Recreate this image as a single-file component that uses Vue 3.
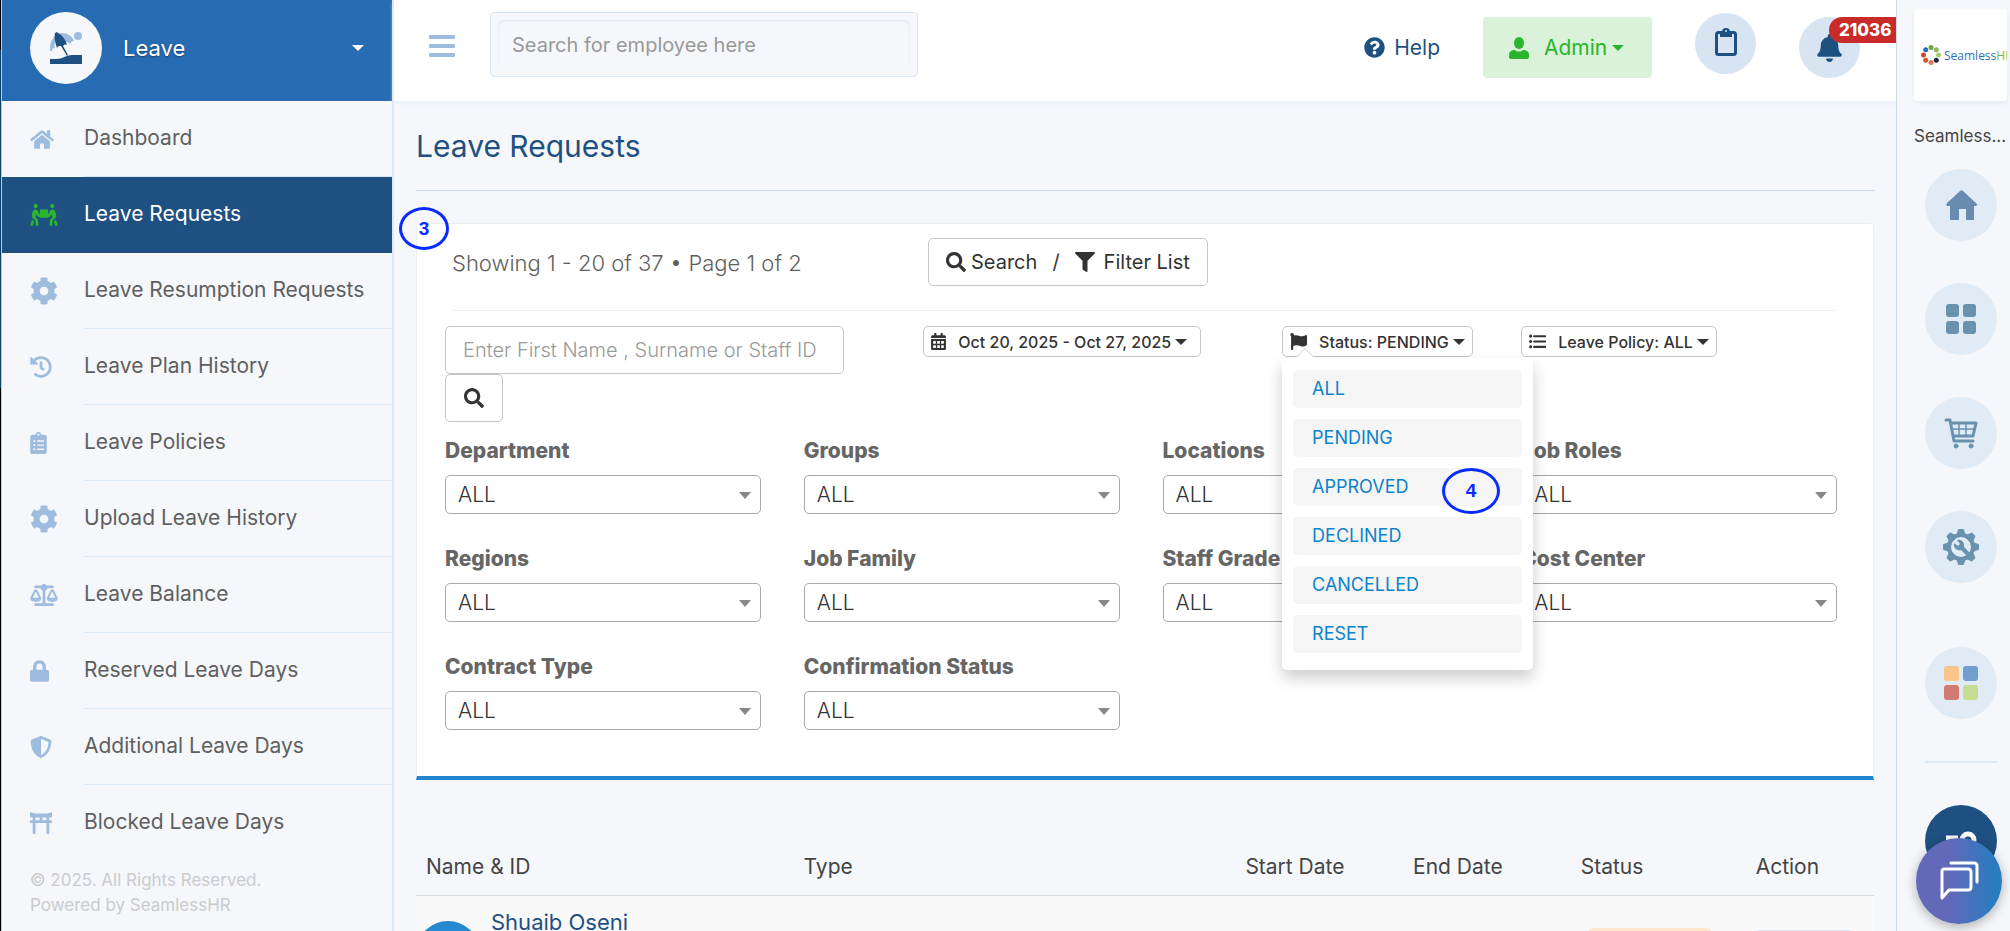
<template>
  <div class="app">
    <div class="edge"></div>

    <!-- left navigation -->
    <aside class="sidebar">
      <button class="module" type="button">
        <span class="module__logo">
          <svg viewBox="0 0 32 32" width="32" height="32">
            <path fill="#9dbcde" d="M0 19C-1 9 5 1 12 1c6 0 10 3 12 8-2 0-3 1-4 3-1-1-2-2-4-2L7 7C5 9 4 13 5 16c-2 0-3 1-3 3z" />
            <circle fill="#9dbcde" cx="28" cy="4" r="4" />
            <path fill="#1f5082" d="M5 1l2-1 1 1c4 2 8 7 9 12-2-1-3 0-4 1l5 9-1 1-6-10c-2 0-3 0-4 2C5 11 4 5 5 1z" />
            <path fill="#1f5082" d="M0 27h6c7 0 10-4 16-4h10v9H0z" />
          </svg>
        </span>
        <span class="module__name">Leave</span>
        <span class="caret"></span>
      </button>
      <nav class="menu">
        <a
          v-for="item in menu"
          :key="item.label"
          href="#"
          :class="['menu__item', { 'menu__item--active': item.label === current }]"
          @click.prevent="current = item.label"
        >
          <span class="menu__icon"><Icon :name="item.icon" :size="item.size" /></span>
          <span class="menu__label">{{ item.label }}</span>
        </a>
      </nav>
      <p class="copyright">© 2025. All Rights Reserved.<br />Powered by SeamlessHR</p>
    </aside>

    <div class="page">
      <header class="topbar">
        <button class="burger" type="button" aria-label="Toggle menu"><i></i><i></i><i></i></button>
        <div class="finder">
          <input type="text" placeholder="Search for employee here" aria-label="Search for employee" />
        </div>
        <a class="help" href="#"><Icon name="question" :size="21" /><span>Help</span></a>
        <button class="admin" type="button">
          <svg viewBox="0 0 20 22" width="20" height="22" fill="currentColor">
            <ellipse cx="10" cy="6" rx="5" ry="6" />
            <path d="M6 13c2 2 6 2 8 0 4 0 6 2 6 5v2c0 1-1 2-2 2H2c-1 0-2-1-2-2v-2c0-3 2-5 6-5z" />
          </svg>
          <span>Admin</span>
          <span class="caret"></span>
        </button>
        <button class="round round--clip" type="button" aria-label="Tasks">
          <svg viewBox="0 0 22 29" width="22" height="29">
            <rect x="1.5" y="5.5" width="19" height="22" rx="2" fill="none" stroke="currentColor" stroke-width="3" />
            <path fill="currentColor" d="M5 5h2a4 4 0 0 1 8 0h2v5H5z" />
            <circle cx="11" cy="4" r="1" fill="#d8e4f2" />
          </svg>
        </button>
        <button class="round round--bell" type="button" aria-label="Notifications">
          <Icon name="bell" :size="28" />
          <span class="count">21036</span>
        </button>
      </header>

      <main class="content">
        <h1>Leave Requests</h1>

        <section class="card">
          <span class="marker marker--card">3</span>
          <div class="card__top">
            <p class="showing">Showing 1 - 20 of 37 • Page 1 of 2</p>
            <div>
              <button class="btn btn--lg" type="button">
                <Icon name="search" :size="20" /><span>Search</span>
                <span class="slash">/</span>
                <Icon name="filter" :size="20" /><span class="filter-text">Filter List</span>
              </button>
            </div>
          </div>

          <div class="toolbar">
            <div class="lookup">
              <input v-model="staff" type="text" placeholder="Enter First Name , Surname or Staff ID" aria-label="Staff" />
              <button class="btn btn--icon" type="button" aria-label="Search staff"><Icon name="search" :size="20" /></button>
            </div>
            <div>
              <button class="btn btn--sm" type="button">
                <Icon name="calendar" :size="17" /><span>Oct 20, 2025 - Oct 27, 2025</span><span class="caret"></span>
              </button>
            </div>
            <div class="dropdown">
              <button class="btn btn--sm" type="button" @click="open = !open">
                <Icon name="flag" :size="17" /><span>Status: PENDING</span><span class="caret"></span>
              </button>
              <ul v-if="open" class="dropdown__menu">
                <li v-for="s in statuses" :key="s">
                  <a href="#" @click.prevent>{{ s }}</a>
                  <span v-if="s === 'APPROVED'" class="marker marker--status">4</span>
                </li>
              </ul>
            </div>
            <div>
              <button class="btn btn--sm" type="button">
                <Icon name="list" :size="17" /><span>Leave Policy: ALL</span><span class="caret"></span>
              </button>
            </div>
          </div>

          <div class="filters">
            <div v-for="(f, i) in filters" :key="f" class="field">
              <label :for="'filter-' + i">{{ f }}</label>
              <div class="select">
                <select :id="'filter-' + i"><option>ALL</option></select>
              </div>
            </div>
          </div>
        </section>

        <table class="requests">
          <thead>
            <tr>
              <th class="c-name">Name &amp; ID</th>
              <th class="c-type">Type</th>
              <th class="c-start">Start Date</th>
              <th class="c-end">End Date</th>
              <th class="c-status">Status</th>
              <th class="c-action">Action</th>
            </tr>
          </thead>
          <tbody>
            <tr>
              <td class="person-cell">
                <div class="person"><span class="avatar"></span><a href="#">Shuaib Oseni</a></div>
              </td>
              <td></td>
              <td></td>
              <td></td>
              <td><span class="state"></span></td>
              <td><button class="view" type="button" aria-label="View request"></button></td>
            </tr>
          </tbody>
        </table>
      </main>
    </div>

    <!-- company rail -->
    <aside class="rail">
      <div class="company">
        <svg viewBox="0 0 20 20" width="20" height="20">
          <circle v-for="(d, i) in logoDots" :key="i" :cx="d.x" :cy="d.y" r="2.5" :fill="d.color" />
        </svg>
        <span>Seamless<b>HR</b></span>
      </div>
      <p class="company-name">Seamless...</p>
      <a class="rail__link" href="#" aria-label="Home">
        <svg viewBox="0 0 31 31" width="31" height="31" fill="#698bb0">
          <path d="M14 1c1-1 2-1 3 0l13 12c2 2 1 3-1 3h-1v13c0 1 0 1-1 1h-6c-1 0-1 0-1-1V19h-7v10c0 1 0 1-1 1H5c-1 0-1 0-1-1V16H2c-2 0-2-1-1-3z" />
        </svg>
      </a>
      <a class="rail__link" href="#" aria-label="Apps">
        <svg viewBox="0 0 30 30" width="30" height="30" fill="#6992ae">
          <rect width="13" height="13" rx="3" /><rect x="17" width="13" height="13" rx="3" />
          <rect y="17" width="13" height="13" rx="3" /><rect x="17" y="17" width="13" height="13" rx="3" />
        </svg>
      </a>
      <a class="rail__link" href="#" aria-label="Store">
        <svg viewBox="0 0 34 32" width="34" height="32" fill="none" stroke="#6992ae" stroke-width="3" stroke-linecap="round" stroke-linejoin="round">
          <path d="M2 3h4l4 21h19M7 6h25l-3 13H10" />
          <path stroke-width="1.5" d="M8 12h22M15 6v13M22 6v13" />
          <circle cx="12" cy="29" r="2" fill="#6992ae" stroke-width="1" /><circle cx="27" cy="29" r="2" fill="#6992ae" stroke-width="1" />
        </svg>
      </a>
      <a class="rail__link" href="#" aria-label="Settings">
        <svg viewBox="0 0 36 36" width="36" height="36" fill="#6992ae">
          <g v-for="a in 8" :key="a" :transform="`rotate(${a * 45} 18 18)`"><path d="M14 7l2-6h4l2 6z" stroke="#6992ae" stroke-width="2" stroke-linejoin="round" /></g>
          <circle cx="18" cy="18" r="12" fill="none" stroke="#6992ae" stroke-width="4" />
          <path d="M14 11l3 4-2 2-4-3c-1 5 3 8 7 7l8 8 3-3-8-8c1-4-2-8-7-7z" />
        </svg>
      </a>
      <a class="rail__link rail__link--suite" href="#" aria-label="Suite">
        <svg viewBox="0 0 34 34" width="34" height="34">
          <rect width="15" height="15" rx="3" fill="#f7c48b" /><rect x="19" width="15" height="15" rx="3" fill="#749dcf" />
          <rect y="19" width="15" height="15" rx="3" fill="#d17a72" /><rect x="19" y="19" width="15" height="15" rx="3" fill="#c5dc93" />
        </svg>
      </a>
      <hr />
      <a class="rail__link rail__link--dark" href="#" aria-label="Switch">
        <svg viewBox="0 0 32 20" width="32" height="20" fill="none" stroke="#fff" stroke-width="5">
          <path d="M1 7h12" /><circle cx="23" cy="9" r="6" />
        </svg>
      </a>
    </aside>

    <button class="chat" type="button" aria-label="Chat">
      <svg viewBox="0 0 40 40" width="40" height="40" fill="none" stroke="#fff" stroke-width="3" stroke-linecap="round" stroke-linejoin="round">
        <path d="M12 2h23c2 0 3 1 3 3v16" />
        <path d="M5 8h24c2 0 3 1 3 3v15c0 2-1 3-3 3H10l-7 8V10c0-1 1-2 2-2z" />
      </svg>
    </button>
  </div>
</template>

<script setup>
import { ref, h } from 'vue'

// [width, height, path]
const paths = {
  home: [576, 512, 'M280.37 148.26L96 300.11V464a16 16 0 0 0 16 16l112.06-.29a16 16 0 0 0 15.92-16V368a16 16 0 0 1 16-16h64a16 16 0 0 1 16 16v95.64a16 16 0 0 0 16 16.05L464 480a16 16 0 0 0 16-16V300L295.67 148.26a12.19 12.19 0 0 0-15.3 0zM571.6 251.47L488 182.56V44.05a12 12 0 0 0-12-12h-56a12 12 0 0 0-12 12v72.61L318.47 43a48 48 0 0 0-61 0L4.34 251.47a12 12 0 0 0-1.6 16.9l25.5 31A12 12 0 0 0 45.15 301l235.22-193.74a12.19 12.19 0 0 1 15.3 0L530.9 301a12 12 0 0 0 16.9-1.6l25.5-31a12 12 0 0 0-1.7-16.93z'],
  carry: [640, 512, 'M128 96c26.5 0 48-21.5 48-48S154.5 0 128 0 80 21.5 80 48s21.5 48 48 48zm384 0c26.5 0 48-21.5 48-48S538.5 0 512 0s-48 21.5-48 48 21.5 48 48 48zm125.7 372.1l-44-110-41.1 46.4-2 18.2 27.7 69.2c5 12.5 17 20.1 29.7 20.1 4 0 8-.7 11.9-2.3 16.4-6.6 24.4-25.2 17.8-41.6zm-34.2-209.8L585 178.1c-4.6-20-18.6-36.8-37.5-44.9-18.5-8-39-6.7-56.1 3.3-22.7 13.4-39.6 34.5-48.1 59.4L432 229.8 416 240v-96c0-8.8-7.2-16-16-16H240c-8.8 0-16 7.2-16 16v96l-16.1-10.2-11.3-33.9c-8.3-25-25.4-46-48.1-59.4-17.2-10-37.6-11.3-56.1-3.3-18.9 8.1-32.9 24.9-37.5 44.9l-18.4 80.2c-4.6 20 .7 41.2 14.4 56.7l67.2 75.9 10.1 92.6C130 499.8 143.8 512 160 512c1.2 0 2.3-.1 3.5-.2 17.6-1.9 30.2-17.7 28.3-35.3l-10.1-92.8c-1.5-13-6.9-25.1-15.6-35l-43.3-49 17.6-70.3 6.8 20.4c4.1 12.5 11.9 23.4 24.5 32.6l51.1 32.5c4.6 2.9 12.1 4.6 17.2 5h160c5.1-.4 12.6-2.1 17.2-5l51.1-32.5c12.6-9.2 20.4-20 24.5-32.6l6.8-20.4 17.6 70.3-43.3 49c-8.7 9.9-14.1 22-15.6 35l-10.1 92.8c-1.9 17.6 10.8 33.4 28.3 35.3 1.2.1 2.3.2 3.5.2 16.1 0 30-12.1 31.8-28.5l10.1-92.6 67.2-75.9c13.6-15.5 19-36.7 14.4-56.7zM46.3 358.1l-44 110c-6.6 16.4 1.4 35 17.8 41.6 16.8 6.6 35.1-1.7 41.6-17.8l27.7-69.2-2-18.2-41.1-46.4z'],
  cog: [512, 512, 'M487.4 315.7l-42.6-24.6c4.3-23.2 4.3-47 0-70.2l42.6-24.6c4.9-2.8 7.1-8.6 5.5-14-11.1-35.6-30-67.8-54.7-94.6-3.8-4.1-10-5.1-14.8-2.3L380.8 110c-17.9-15.4-38.5-27.3-60.8-35.1V25.8c0-5.6-3.9-10.5-9.4-11.7-36.7-8.2-74.3-7.8-109.2 0-5.5 1.2-9.4 6.1-9.4 11.7V75c-22.2 7.9-42.8 19.8-60.8 35.1L88.7 85.5c-4.9-2.8-11-1.9-14.8 2.3-24.7 26.7-43.6 58.9-54.7 94.6-1.7 5.4.6 11.2 5.5 14L67.3 221c-4.3 23.2-4.3 47 0 70.2l-42.6 24.6c-4.9 2.8-7.1 8.6-5.5 14 11.1 35.6 30 67.8 54.7 94.6 3.8 4.1 10 5.1 14.8 2.3l42.6-24.6c17.9 15.4 38.5 27.3 60.8 35.1v49.2c0 5.6 3.9 10.5 9.4 11.7 36.7 8.2 74.3 7.8 109.2 0 5.5-1.2 9.4-6.1 9.4-11.7v-49.2c22.2-7.9 42.8-19.8 60.8-35.1l42.6 24.6c4.9 2.8 11 1.9 14.8-2.3 24.7-26.7 43.6-58.9 54.7-94.6 1.5-5.5-.7-11.3-5.6-14.1zM256 336c-44.1 0-80-35.9-80-80s35.9-80 80-80 80 35.9 80 80-35.9 80-80 80z'],
  history: [512, 512, 'M504 255.531c.253 136.64-111.18 248.372-247.82 248.468-59.015.042-113.223-20.53-155.822-54.911-11.077-8.94-11.905-25.541-1.839-35.607l11.267-11.267c8.609-8.609 22.353-9.551 31.891-1.984C173.062 425.135 212.781 440 256 440c101.705 0 184-82.311 184-184 0-101.705-82.311-184-184-184-48.814 0-93.149 18.969-126.068 49.932l50.754 50.754c10.08 10.08 2.941 27.314-11.313 27.314H24c-8.837 0-16-7.163-16-16V38.627c0-14.254 17.234-21.393 27.314-11.314l49.372 49.372C129.209 34.136 189.552 8 256 8c136.81 0 247.747 110.78 248 247.531zm-180.912 78.784l9.823-12.63c8.138-10.463 6.253-25.542-4.21-33.679L288 256.349V152c0-13.255-10.745-24-24-24h-16c-13.255 0-24 10.745-24 24v135.651l65.409 50.874c10.463 8.137 25.541 6.253 33.679-4.21z'],
  clipboard: [384, 512, 'M336 64h-80c0-35.3-28.7-64-64-64s-64 28.7-64 64H48C21.5 64 0 85.5 0 112v352c0 26.5 21.5 48 48 48h288c26.5 0 48-21.5 48-48V112c0-26.5-21.5-48-48-48zM96 424c-13.3 0-24-10.7-24-24s10.7-24 24-24 24 10.7 24 24-10.7 24-24 24zm0-96c-13.3 0-24-10.7-24-24s10.7-24 24-24 24 10.7 24 24-10.7 24-24 24zm0-96c-13.3 0-24-10.7-24-24s10.7-24 24-24 24 10.7 24 24-10.7 24-24 24zm96-192c13.3 0 24 10.7 24 24s-10.7 24-24 24-24-10.7-24-24 10.7-24 24-24zm128 368c0 4.4-3.6 8-8 8H168c-4.4 0-8-3.6-8-8v-16c0-4.4 3.6-8 8-8h144c4.4 0 8 3.6 8 8v16zm0-96c0 4.4-3.6 8-8 8H168c-4.4 0-8-3.6-8-8v-16c0-4.4 3.6-8 8-8h144c4.4 0 8 3.6 8 8v16zm0-96c0 4.4-3.6 8-8 8H168c-4.4 0-8-3.6-8-8v-16c0-4.4 3.6-8 8-8h144c4.4 0 8 3.6 8 8v16z'],
  scale: [640, 512, 'M256 336h-.02c0-16.18 1.34-8.73-85.05-181.51-17.65-35.29-68.19-35.36-85.87 0C-2.06 328.75.02 320.33.02 336H0c0 44.18 57.31 80 128 80s128-35.82 128-80zM128 176l72 144H56l72-144zm511.98 160c0-16.18 1.34-8.73-85.05-181.51-17.65-35.29-68.19-35.36-85.87 0-87.12 174.26-85.04 165.84-85.04 181.51H384c0 44.18 57.31 80 128 80s128-35.82 128-80h-.02zM440 320l72-144 72 144H440zm88 128H352V153.25c23.51-10.29 41.16-31.48 46.39-57.25H528c8.84 0 16-7.16 16-16V48c0-8.84-7.16-16-16-16H383.64C369.04 12.68 346.09 0 320 0s-49.04 12.68-63.64 32H112c-8.84 0-16 7.16-16 16v32c0 8.84 7.16 16 16 16h129.61c5.23 25.76 22.87 46.96 46.39 57.25V448H112c-8.84 0-16 7.16-16 16v32c0 8.84 7.16 16 16 16h416c8.84 0 16-7.16 16-16v-32c0-8.84-7.16-16-16-16z'],
  lock: [448, 512, 'M400 224h-24v-72C376 68.2 307.8 0 224 0S72 68.2 72 152v72H48c-26.5 0-48 21.5-48 48v192c0 26.5 21.5 48 48 48h352c26.5 0 48-21.5 48-48V272c0-26.5-21.5-48-48-48zm-104 0H152v-72c0-39.7 32.3-72 72-72s72 32.3 72 72v72z'],
  shield: [512, 512, 'M466.5 83.7l-192-80a48.15 48.15 0 0 0-36.9 0l-192 80C27.7 91.1 16 108.6 16 128c0 198.5 114.5 335.7 221.5 380.3 11.8 4.9 25.1 4.9 36.9 0C360.1 472.6 496 349.3 496 128c0-19.4-11.7-36.9-29.5-44.3zM256.1 446.3l-.1-381 175.9 73.3c-3.3 151.4-82.1 261.1-175.8 307.7z'],
  gate: [512, 512, 'M376.45 32h-240.9A303.17 303.17 0 0 1 0 0v96c0 17.67 14.33 32 32 32h32v64H16c-8.84 0-16 7.16-16 16v32c0 8.84 7.16 16 16 16h48v240c0 8.84 7.16 16 16 16h32c8.84 0 16-7.16 16-16V256h256v240c0 8.84 7.16 16 16 16h32c8.84 0 16-7.16 16-16V256h48c8.84 0 16-7.16 16-16v-32c0-8.84-7.16-16-16-16h-48v-64h32c17.67 0 32-14.33 32-32V0a303.17 303.17 0 0 1-135.55 32zM128 128h96v64h-96v-64zm256 64h-96v-64h96v64z'],
  question: [512, 512, 'M504 256c0 136.997-111.043 248-248 248S8 392.997 8 256C8 119.083 119.043 8 256 8s248 111.083 248 248zM262.655 90c-54.497 0-89.255 22.957-116.549 63.758-3.536 5.286-2.353 12.415 2.715 16.258l34.699 26.31c5.205 3.947 12.621 3.008 16.665-2.122 17.864-22.658 30.113-35.797 57.303-35.797 20.429 0 45.698 13.148 45.698 32.958 0 14.976-12.363 22.667-32.534 33.976C247.128 238.528 216 254.941 216 296v4c0 6.627 5.373 12 12 12h56c6.627 0 12-5.373 12-12v-1.333c0-28.462 83.186-29.647 83.186-106.667 0-58.002-60.165-102-116.531-102zM256 338c-25.365 0-46 20.635-46 46 0 25.364 20.635 46 46 46s46-20.636 46-46c0-25.365-20.635-46-46-46z'],
  bell: [448, 512, 'M224 512c35.32 0 63.97-28.65 63.97-64H160.03c0 35.35 28.65 64 63.97 64zm215.39-149.71c-19.32-20.76-55.47-51.99-55.47-154.29 0-77.7-54.48-139.9-127.94-155.16V32c0-17.67-14.32-32-31.98-32s-31.98 14.33-31.98 32v20.84C118.56 68.1 64.08 130.3 64.08 208c0 102.3-36.15 133.53-55.47 154.29-6 6.45-8.66 14.16-8.61 21.71.11 16.4 12.98 32 32.1 32h383.8c19.12 0 32-15.6 32.1-32 .05-7.55-2.61-15.27-8.61-21.71z'],
  search: [512, 512, 'M505 442.7L405.3 343c-4.5-4.5-10.6-7-17-7H372c27.6-35.3 44-79.7 44-128C416 93.1 322.9 0 208 0S0 93.1 0 208s93.1 208 208 208c48.3 0 92.7-16.4 128-44v16.3c0 6.4 2.5 12.5 7 17l99.7 99.7c9.4 9.4 24.6 9.4 33.9 0l28.3-28.3c9.4-9.4 9.4-24.6.1-34zM208 336c-70.7 0-128-57.2-128-128 0-70.7 57.2-128 128-128 70.7 0 128 57.2 128 128 0 70.7-57.2 128-128 128z'],
  filter: [512, 512, 'M487.976 0H24.028C2.71 0-8.047 25.866 7.058 40.971L192 225.941V432c0 7.831 3.821 15.17 10.237 19.662l80 55.98C298.02 518.69 320 507.493 320 487.98V225.941l184.947-184.97C520.021 25.896 509.338 0 487.976 0z'],
  calendar: [448, 512, 'M400 64h-48V12c0-7-5-12-12-12h-40c-7 0-12 5-12 12v52H160V12c0-7-5-12-12-12h-40c-7 0-12 5-12 12v52H48C21 64 0 85 0 112v40h448v-40c0-27-21-48-48-48zM0 184v280c0 27 21 48 48 48h352c27 0 48-21 48-48V184zM64 240h80v80H64zM184 240h80v80h-80zM304 240h80v80h-80zM64 368h80v80H64zM184 368h80v80h-80zM304 368h80v80h-80z'],
  flag: [512, 512, 'M349.565 98.783C295.978 98.783 251.721 64 184.348 64c-24.955 0-47.309 4.384-68.045 12.013a55.947 55.947 0 0 0 3.586-23.562C118.117 24.015 94.806 1.206 66.338.048 34.345-1.254 8 24.296 8 56c0 19.026 9.497 35.825 24 45.945V488c0 13.255 10.745 24 24 24h16c13.255 0 24-10.745 24-24v-94.4c28.311-12.064 63.582-22.122 114.435-22.122 53.588 0 97.844 34.783 165.217 34.783 48.169 0 86.667-16.294 122.505-40.858C506.84 359.452 512 349.571 512 339.045v-243.1c0-23.393-24.269-38.87-45.485-29.016-34.338 15.948-76.454 31.854-116.95 31.854z'],
  list: [512, 512, 'M48 48a48 48 0 1 0 1 0zM48 208a48 48 0 1 0 1 0zM48 368a48 48 0 1 0 1 0zM144 64h352c9 0 16 7 16 16v32c0 9-7 16-16 16H144c-9 0-16-7-16-16V80c0-9 7-16 16-16zM144 224h352c9 0 16 7 16 16v32c0 9-7 16-16 16H144c-9 0-16-7-16-16v-32c0-9 7-16 16-16zM144 384h352c9 0 16 7 16 16v32c0 9-7 16-16 16H144c-9 0-16-7-16-16v-32c0-9 7-16 16-16z'],
}

// size is the icon's height in px
const Icon = ({ name, size }) => {
  const [w, ht, d] = paths[name]
  return h('svg', { viewBox: `0 0 ${w} ${ht}`, height: size, width: Math.round((size * w) / ht), fill: 'currentColor' }, [
    h('path', { d, 'fill-rule': 'evenodd' }),
  ])
}
Icon.props = ['name', 'size']

const current = ref('Leave Requests')
const open = ref(true)
const staff = ref('')

const menu = [
  { label: 'Dashboard', icon: 'home', size: 21 },
  { label: 'Leave Requests', icon: 'carry', size: 22 },
  { label: 'Leave Resumption Requests', icon: 'cog', size: 28 },
  { label: 'Leave Plan History', icon: 'history', size: 22 },
  { label: 'Leave Policies', icon: 'clipboard', size: 22 },
  { label: 'Upload Leave History', icon: 'cog', size: 28 },
  { label: 'Leave Balance', icon: 'scale', size: 22 },
  { label: 'Reserved Leave Days', icon: 'lock', size: 22 },
  { label: 'Additional Leave Days', icon: 'shield', size: 22 },
  { label: 'Blocked Leave Days', icon: 'gate', size: 22 },
]

const statuses = ['ALL', 'PENDING', 'APPROVED', 'DECLINED', 'CANCELLED', 'RESET']

const filters = [
  'Department', 'Groups', 'Locations', 'Job Roles',
  'Regions', 'Job Family', 'Staff Grade', 'Cost Center',
  'Contract Type', 'Confirmation Status',
]

const logoColors = ['#6da544', '#8bb95c', '#a5cf6a', '#1c2b3a', '#e0795a', '#d9532f', '#d8402f', '#2a6db0']
const logoDots = logoColors.map((color, i) => {
  const a = (i * Math.PI) / 4
  return { color, x: 10 + 7.5 * Math.sin(a), y: 10 - 7.5 * Math.cos(a) }
})
</script>

<style>
body {
  margin: 0;
  overflow: hidden;
  background: #f5f7fb;
}
</style>

<style scoped>
* {
  box-sizing: border-box;
}

.app {
  display: flex;
  height: 100vh;
  overflow: hidden;
  background: #f5f7fb;
  color: #5f5f5f;
  font-family: Inter, "Liberation Sans", sans-serif;
  font-size: 20px;
}

a { text-decoration: none; }
p, h1, ul { margin: 0; padding: 0; }
svg { display: block; flex: none; }

button, input, select {
  font: inherit;
  color: inherit;
  margin: 0;
}

.edge {
  flex: none;
  width: 2px;
  border-right: 1px solid #c3cad3;
  background: linear-gradient(#000 50px, #0b4068 50px, #0b4068 388px, #000 388px);
}

.caret {
  flex: none;
  border: 6px solid transparent;
  border-top-color: currentColor;
  border-bottom: 0;
}

/* sidebar */
.sidebar {
  flex: none;
  width: 392px;
  border-right: 2px solid #dbe8f6;
}

.module {
  display: flex;
  align-items: center;
  width: 100%;
  height: 101px;
  padding: 0 28px 5px;
  border: 0;
  background: #276bb2;
  color: #fff;
  font-size: 22px;
  text-align: left;
}
.module__logo {
  display: flex;
  align-items: center;
  justify-content: center;
  width: 72px;
  height: 72px;
  border-radius: 50%;
  background: #f5f7fb;
}
.module__name {
  flex: 1;
  margin-left: 21px;
  text-shadow: 0 1px 2px rgba(0, 0, 0, 0.4);
}

.menu__item {
  display: flex;
  align-items: center;
  height: 76px;
  padding-left: 28px;
  color: #5f5f5f;
  font-size: 21px;
}
.menu__icon {
  width: 54px;
  color: #9dbcde;
}
.menu__label {
  flex: 1;
  height: 76px;
  border-bottom: 1px solid #dde9f5;
  line-height: 74px;
}
.menu__item:last-child .menu__label { border-color: transparent; }
.menu__item--active {
  background: #1f5082;
  color: #fff;
}
.menu__item--active .menu__icon { color: #2ab52d; }
.menu__item--active .menu__label { border-color: #1f5082; }

.copyright {
  padding: 7px 28px;
  color: #cbcbcb;
  font-size: 17px;
  line-height: 25px;
}

/* top bar */
.page {
  flex: 1;
  min-width: 0;
}
.topbar {
  display: flex;
  align-items: flex-start;
  height: 101px;
  padding-left: 35px;
  background: #fff;
  box-shadow: 0 2px 5px #e8eff9;
}
.burger {
  display: flex;
  flex-direction: column;
  gap: 5px;
  width: 26px;
  margin-top: 35px;
  padding: 0;
  border: 0;
  background: none;
}
.burger i {
  height: 4px;
  border-radius: 1px;
  background: #9dbcde;
}
.finder {
  width: 428px;
  height: 65px;
  margin: 12px auto 0 35px;
  padding: 7px;
  border: 1px solid #d7e5f6;
  border-radius: 4px;
  background: #f5f7fb;
}
.finder input {
  width: 100%;
  height: 49px;
  padding: 0 14px;
  border: 0;
  border-radius: 6px;
  background: none;
  box-shadow: inset 0 1px 2px #dfe2e6;
}
input::placeholder {
  color: #999;
  opacity: 1;
}
.help {
  display: flex;
  align-items: center;
  gap: 9px;
  height: 61px;
  margin: 17px 43px 0 0;
  color: #1f5082;
  font-size: 21px;
}
.admin {
  display: flex;
  align-items: center;
  width: 169px;
  height: 61px;
  margin-top: 17px;
  padding: 0 26px;
  border: 0;
  border-radius: 4px;
  background: #d9f2d9;
  color: #2ab52d;
  font-size: 21px;
}
.admin span:nth-child(2) { margin: 0 5px 0 15px; }
.round {
  position: relative;
  display: flex;
  align-items: center;
  justify-content: center;
  width: 61px;
  height: 61px;
  padding: 0;
  border: 0;
  border-radius: 50%;
  background: #d8e4f2;
  color: #1f5082;
}
.round--clip { margin: 13px 43px 0; }
.round--clip svg { margin-bottom: 4px; }
.round--bell { margin: 17px 36px 0 0; }
.count {
  position: absolute;
  top: 0;
  left: 30px;
  width: 67px;
  height: 26px;
  padding-left: 10px;
  border-radius: 13px 0 0 13px;
  background: #c92a2a;
  color: #fff;
  font-size: 17px;
  font-weight: 800;
  line-height: 26px;
  text-align: left;
}

/* content */
.content { padding: 0 22px; }
h1 {
  height: 90px;
  border-bottom: 1px solid #cbd8ea;
  color: #1f5082;
  font-size: 30px;
  font-weight: 400;
  line-height: 90px;
}

.card {
  position: relative;
  margin-top: 32px;
  padding: 14px 36px 46px 28px;
  border: 1px solid #eceff2;
  border-bottom: 4px solid #2185d0;
  border-radius: 4px 4px 0 0;
  background: #fff;
}
.card__top, .toolbar {
  display: grid;
  grid-template-columns: 4fr 3fr 2fr 3fr;
  margin-right: -43px;
}
.card__top {
  position: relative;
  padding: 0 0 23px 7px;
}
.card__top::after {
  content: "";
  position: absolute;
  right: 43px;
  bottom: 0;
  left: 7px;
  height: 1px;
  background: #eee;
}
.showing {
  font-size: 22px;
  font-weight: 300;
  line-height: 50px;
}

.btn {
  display: inline-flex;
  align-items: center;
  border: 1px solid #c6c6c6;
  border-radius: 5px;
  background: #fff;
  color: #333;
  white-space: nowrap;
}
.btn--lg {
  height: 48px;
  padding: 0 17px;
}
.btn--lg > span { margin-left: 5px; }
.btn--lg .slash { margin: 0 15px; }
.btn--lg .filter-text { margin-left: 9px; }
.btn--icon {
  height: 48px;
  padding: 0 18px;
}
.btn--sm {
  height: 31px;
  padding: 0 13px 0 7px;
  font-size: 16px;
  font-weight: 500;
}
.dropdown .btn--sm, .toolbar > :last-child .btn--sm { padding-right: 7px; }
.btn--sm > span:nth-child(2) { margin: 0 4px 0 12px; }

.toolbar { margin-top: 15px; }
.lookup input {
  display: block;
  width: 399px;
  height: 48px;
  padding: 0 17px;
  border: 1px solid #c6c6c6;
  border-radius: 5px;
  font-weight: 300;
}

.dropdown { position: relative; }
.dropdown__menu {
  position: absolute;
  z-index: 2;
  top: 32px;
  left: 0;
  width: 251px;
  padding: 12px 11px 17px;
  border-radius: 5px;
  background: #fff;
  box-shadow: 0 8px 16px rgba(0, 0, 0, 0.2);
  list-style: none;
}
.dropdown__menu::before {
  content: "";
  position: absolute;
  top: -9px;
  left: 14px;
  border: 9px solid transparent;
  border-top: 0;
  border-bottom-color: #fff;
  filter: drop-shadow(0 -1px 0 #ccc);
}
.dropdown__menu li {
  position: relative;
  margin-bottom: 11px;
}
.dropdown__menu li:last-child { margin-bottom: 0; }
.dropdown__menu a {
  display: block;
  height: 38px;
  padding-left: 19px;
  border-radius: 5px;
  background: #f5f5f5;
  color: #0b83cd;
  font-size: 18px;
  line-height: 37px;
}

/* numbered callouts over the page */
.marker {
  position: absolute;
  display: flex;
  align-items: center;
  justify-content: center;
  border: 3px solid #0a2bff;
  border-radius: 50%;
  color: #0a2bff;
  font: 700 19px "Liberation Sans", sans-serif;
}
.marker--card {
  top: -17px;
  left: -18px;
  width: 50px;
  height: 43px;
}
.marker--status {
  top: 0;
  right: 22px;
  width: 58px;
  height: 46px;
}

.filters {
  display: grid;
  grid-template-columns: repeat(4, 1fr);
  gap: 33px 43px;
  margin-top: 17px;
}
.field label {
  display: block;
  margin-bottom: 12px;
  color: #666;
  font-size: 21px;
  font-weight: 800;
  line-height: 24px;
}
.select { position: relative; }
.select::after {
  content: "";
  position: absolute;
  top: 17px;
  right: 10px;
  border: 6px solid transparent;
  border-top: 7px solid #888;
  border-bottom: 0;
  pointer-events: none;
}
.select select {
  display: block;
  width: 100%;
  height: 39px;
  padding: 0 12px;
  border: 1px solid #a9a9a9;
  border-radius: 5px;
  background: #fff;
  color: #333;
  font-size: 21px;
  font-weight: 300;
  appearance: none;
}

/* requests table */
.requests {
  width: 100%;
  margin-top: 59px;
  border-collapse: collapse;
  table-layout: fixed;
}
.requests th {
  height: 56px;
  padding: 0 10px;
  border-bottom: 1px solid #d9dcdf;
  color: #444;
  font-size: 21px;
  font-weight: 400;
  text-align: left;
}
.c-name { width: 25.9%; }
.c-type { width: 30.3%; }
.c-start { width: 11.5%; }
.c-end { width: 11.5%; }
.c-status { width: 12%; }
.requests tbody tr { background: #f9f9f9; }
.requests td {
  padding: 12px 10px;
  vertical-align: top;
}
.requests .person-cell { padding-left: 0; }
.person {
  display: flex;
  gap: 11px;
}
.person a {
  color: #1f5082;
  font-size: 22px;
  line-height: 28px;
}
.avatar {
  width: 64px;
  height: 64px;
  margin-top: 13px;
  border-radius: 50%;
  background: #2489d0;
}
.state {
  display: block;
  width: 126px;
  height: 38px;
  margin: 20px 0 0 6px;
  border-radius: 8px;
  background: #fde6cb;
}
.view {
  width: 96px;
  height: 38px;
  margin-top: 22px;
  border: 0;
  border-radius: 4px;
  background: #d8e6f5;
}

/* right rail */
.rail {
  display: flex;
  flex: none;
  flex-direction: column;
  align-items: center;
  width: 114px;
  padding-top: 9px;
  border-left: 1px solid #c9dcf0;
  background: #f5f7fb;
  position: relative;
}
.company {
  display: flex;
  flex: none;
  align-items: center;
  gap: 3px;
  align-self: flex-start;
  width: 93px;
  height: 92px;
  margin-left: 17px;
  padding-left: 7px;
  border-radius: 4px;
  background: #fff;
  box-shadow: 0 2px 4px #e3ecf7;
  color: #2a72b5;
  font: 12px "Open Sans", sans-serif;
  overflow: hidden;
}
.company b {
  color: #7ab648;
  font-weight: 400;
}
.company-name {
  align-self: flex-start;
  width: 96px;
  margin: 23px 0 20px 17px;
  color: #444;
  font-size: 17px;
  line-height: 25px;
}
.rail__link {
  display: flex;
  flex: none;
  align-items: center;
  justify-content: center;
  width: 72px;
  height: 72px;
  margin: 0 0 42px 15px;
  border-radius: 50%;
  background: #e0ebf5;
  align-self: center;
}
.rail__link--suite { margin-top: 22px; }
.rail__link--dark { background: #1f5082; }
.rail hr {
  flex: none;
  width: 72px;
  height: 2px;
  margin: 0 0 42px 15px;
  border: 0;
  background: #dbe8f6;
}

.chat {
  position: absolute;
  z-index: 3;
  right: 8px;
  bottom: 7px;
  display: flex;
  align-items: center;
  justify-content: center;
  width: 86px;
  height: 86px;
  padding: 0;
  border: 0;
  border-radius: 50%;
  background: linear-gradient(90deg, #6169b8 40%, #2a7bbf 90%);
  box-shadow: 0 3px 12px rgba(0, 0, 0, 0.3);
}
</style>
